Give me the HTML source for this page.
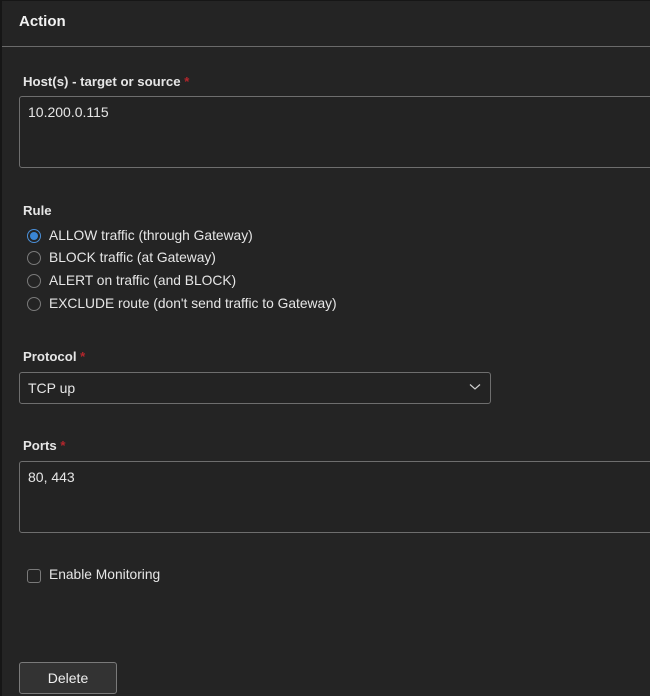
<!DOCTYPE html>
<html><head><style>
*{box-sizing:border-box;margin:0;padding:0}
body{width:650px;height:696px;background:#242424;font-family:"Liberation Sans",Arial,sans-serif;color:#e8e8e8;position:relative;overflow:hidden}
.strip{position:absolute;left:0;top:0;width:2px;height:696px;background:#161616}
.top{position:absolute;left:0;top:0;width:650px;height:1px;background:#161616}
.abs{position:absolute;white-space:nowrap}
.h{left:19px;top:13px;font-size:15px;font-weight:bold;color:#f2f2f2}
.line{position:absolute;left:2px;top:46px;width:648px;height:1px;background:#6a6a6a}
.lbl{font-size:13.2px;font-weight:bold;color:#e6e6e6;left:23px}
.req{color:#b3262c}
.box{position:absolute;border:1px solid #6e6e6e;border-radius:3px;background:#232323}
.val{font-size:14px;color:#e6e6e6}
.radio{position:absolute;left:27px;width:14px;height:14px;border:1px solid #7a7a7a;border-radius:50%}
.rt{left:49px;font-size:13.8px;color:#e6e6e6}
</style></head><body>
<div class="strip"></div><div class="top"></div>
<div class="abs h">Action</div>
<div class="line"></div>
<div class="abs lbl" style="top:74px">Host(s) - target or source <span class="req">*</span></div>
<div class="box" style="left:19px;top:96px;width:640px;height:72px"></div>
<div class="abs val" style="left:28px;top:104px">10.200.0.115</div>
<div class="abs lbl" style="top:203px">Rule</div>
<div class="radio" style="top:229px;border-color:#4a8fd8;"><div style="position:absolute;left:2px;top:2px;width:8px;height:8px;border-radius:50%;background:#3a86d6"></div></div>
<div class="abs rt" style="top:228px">ALLOW traffic (through Gateway)</div>
<div class="radio" style="top:251px"></div>
<div class="abs rt" style="top:250px">BLOCK traffic (at Gateway)</div>
<div class="radio" style="top:274px"></div>
<div class="abs rt" style="top:273px">ALERT on traffic (and BLOCK)</div>
<div class="radio" style="top:297px"></div>
<div class="abs rt" style="top:296px">EXCLUDE route (don't send traffic to Gateway)</div>
<div class="abs lbl" style="top:349px">Protocol <span class="req">*</span></div>
<div class="box" style="left:19px;top:372px;width:472px;height:32px"></div>
<div class="abs val" style="left:28px;top:380px">TCP up</div>
<svg class="abs" style="left:469px;top:383px" width="12" height="8" viewBox="0 0 12 8"><path d="M1 1.5 L6 6 L11 1.5" fill="none" stroke="#cfcfcf" stroke-width="1.2"/></svg>
<div class="abs lbl" style="top:438px">Ports <span class="req">*</span></div>
<div class="box" style="left:19px;top:461px;width:640px;height:72px"></div>
<div class="abs val" style="left:28px;top:469px">80, 443</div>
<div style="position:absolute;left:27px;top:569px;width:14px;height:14px;border:1px solid #7a7a7a;border-radius:3px"></div>
<div class="abs rt" style="top:567px">Enable Monitoring</div>
<div style="position:absolute;left:19px;top:662px;width:98px;height:32px;background:#333;border:1px solid #7a7a7a;border-radius:3px;font-size:14px;color:#f0f0f0;text-align:center;line-height:30px">Delete</div>
</body></html>
